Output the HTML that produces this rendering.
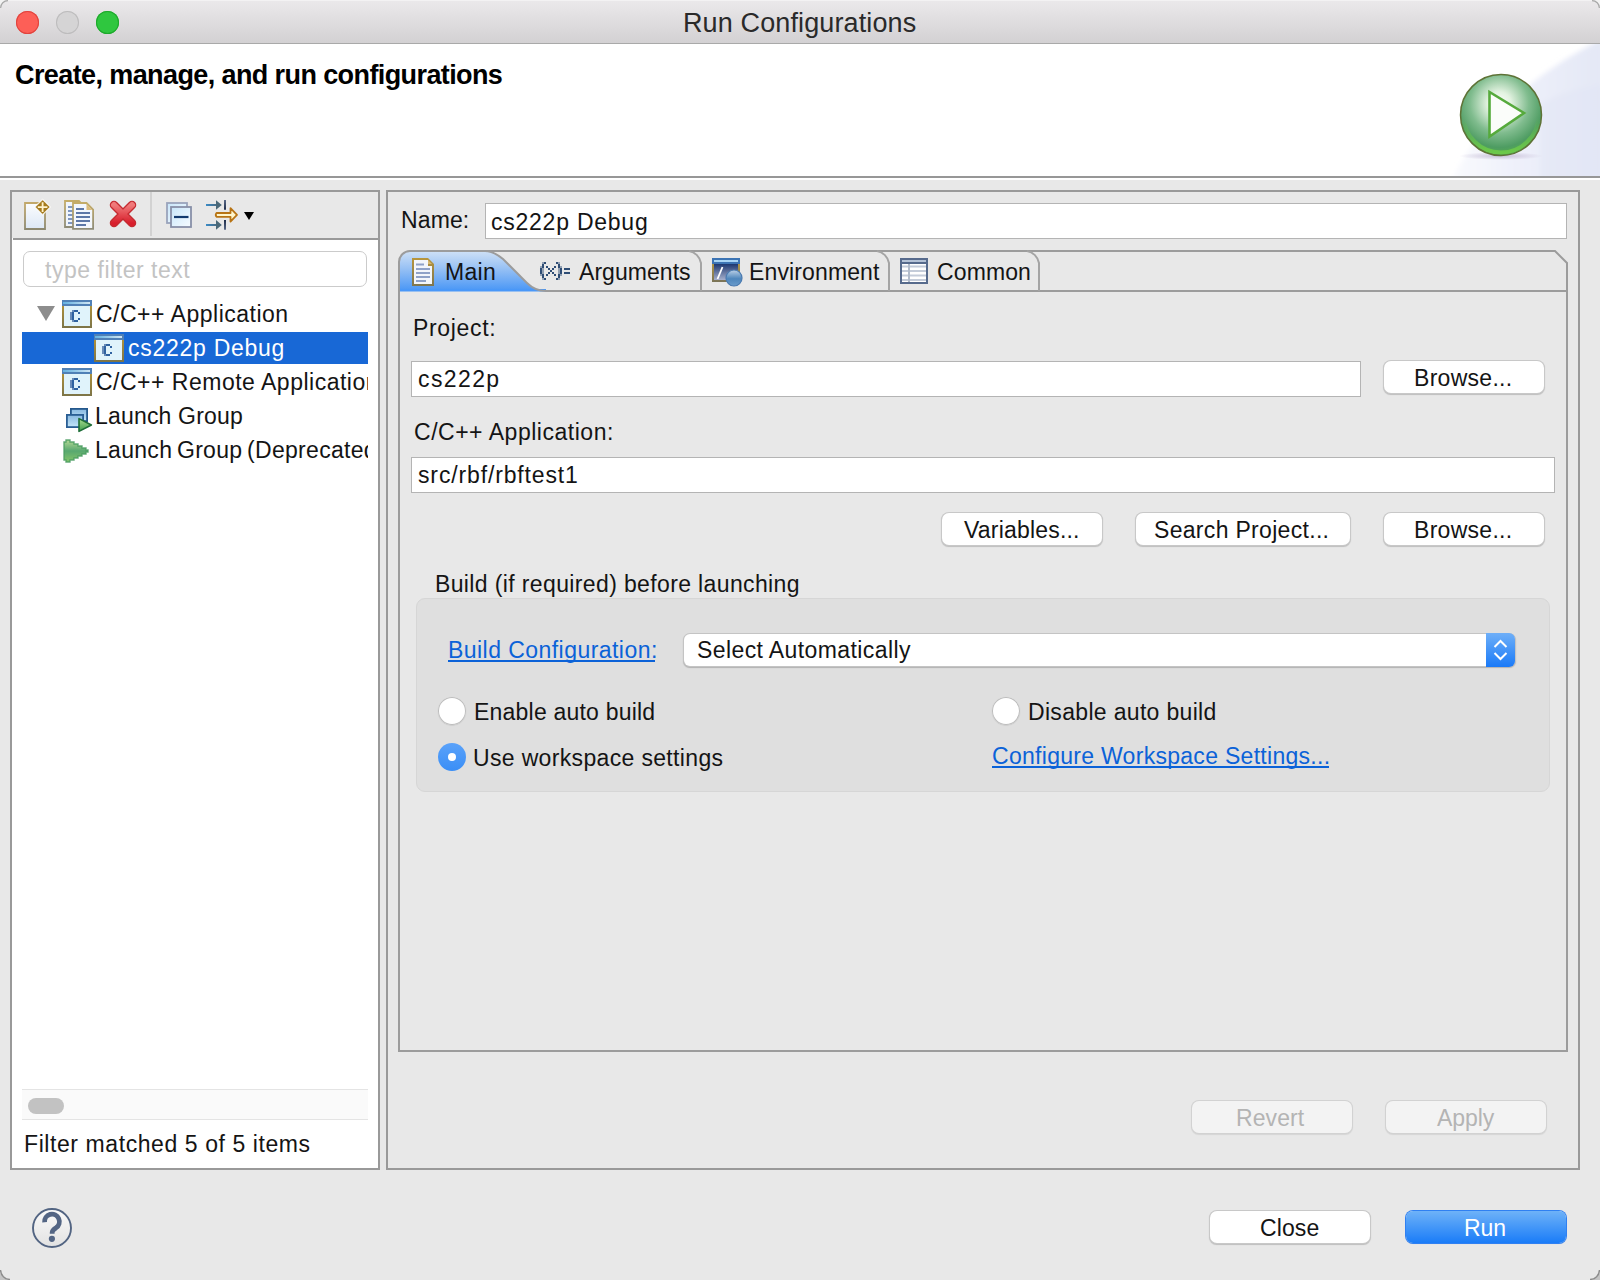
<!DOCTYPE html>
<html><head><meta charset="utf-8">
<style>
html,body{margin:0;padding:0}
body{width:1600px;height:1280px;position:relative;overflow:hidden;background:#e8e8e8;font-family:"Liberation Sans",sans-serif;color:#111}
.a{position:absolute}
.t{position:absolute;font-size:23px;line-height:23px;white-space:pre;letter-spacing:0.85px;color:#141414}
.box{position:absolute;box-sizing:border-box}
.btn{position:absolute;box-sizing:border-box;background:#fff;border-radius:7px;box-shadow:0 0 0 1px #c8c8c8,0 1px 1px 0.5px rgba(0,0,0,0.18)}
.bord{position:absolute;box-sizing:border-box;border:2px solid #999}
</style></head>
<body>
<!-- title bar -->
<div class="a" style="left:0;top:0;width:1600px;height:43px;background:linear-gradient(#ebe9eb,#d3d1d3);border-radius:10px 10px 0 0"></div>
<div class="a" style="left:0;top:43px;width:1600px;height:1px;background:#a9a9a9"></div>
<div class="a" style="left:8px;top:0;width:1584px;height:1px;background:#f3f2f3"></div>
<div class="a" style="left:16px;top:10.5px;width:23.2px;height:23.2px;border-radius:50%;background:#fd5f57;box-shadow:inset 0 0 0 1px #e0443e"></div>
<div class="a" style="left:56px;top:10.5px;width:23.2px;height:23.2px;border-radius:50%;background:#d5d4d5;box-shadow:inset 0 0 0 1px #bdbcbd"></div>
<div class="a" style="left:96px;top:10.5px;width:23.2px;height:23.2px;border-radius:50%;background:#2fc73f;box-shadow:inset 0 0 0 1px #1ea82c"></div>
<div class="t" style="left:683px;top:10px;font-size:27px;line-height:27px;letter-spacing:0.12px;color:#2a2a2a">Run Configurations</div>

<!-- header -->
<div class="a" style="left:0;top:44px;width:1600px;height:132px;background:#fff"></div>
<div class="a" style="left:0;top:176px;width:1600px;height:2px;background:#979797"></div>
<div class="a" style="left:0;top:178px;width:1600px;height:2px;background:#fff"></div>
<svg class="a" style="left:1400px;top:44px" width="200" height="132" viewBox="1400 44 200 132">
 <defs>
  <filter id="blr" x="-20%" y="-20%" width="140%" height="140%"><feGaussianBlur stdDeviation="2.5"/></filter>
  <linearGradient id="sw1" x1="1450" y1="0" x2="1600" y2="0" gradientUnits="userSpaceOnUse"><stop offset="0" stop-color="#fafbfe"/><stop offset="0.45" stop-color="#eef0fa"/><stop offset="1" stop-color="#e4e8f6"/></linearGradient>
  <radialGradient id="pb" cx="0.48" cy="0.36" r="0.66"><stop offset="0" stop-color="#ffffff"/><stop offset="0.22" stop-color="#e2f2e0"/><stop offset="0.55" stop-color="#80bc8e"/><stop offset="0.82" stop-color="#4e9c62"/><stop offset="1" stop-color="#58b048"/></radialGradient>
  <linearGradient id="rim" x1="0" y1="0" x2="0" y2="1"><stop offset="0.55" stop-color="#6cc84a" stop-opacity="0"/><stop offset="1" stop-color="#6cc84a" stop-opacity="1"/></linearGradient>
  <radialGradient id="psh" cx="0.5" cy="0.5" r="0.5"><stop offset="0" stop-color="#c8c0d8"/><stop offset="1" stop-color="#c8c0d8" stop-opacity="0"/></radialGradient>
 </defs>
 <g filter="url(#blr)">
  <path d="M1451 182C1472 138 1515 82 1604 38V182Z" fill="url(#sw1)"/>
  <path d="M1540 104C1560 93 1580 87 1604 85V180H1540Z" fill="#dfe4f5" opacity="0.45"/>
 </g>
 <ellipse cx="1501" cy="156" rx="42" ry="4" fill="url(#psh)"/>
 <circle cx="1501" cy="115" r="40.5" fill="url(#pb)"/>
 <circle cx="1501" cy="115" r="37.5" fill="none" stroke="url(#rim)" stroke-width="4"/>
 <circle cx="1501" cy="115" r="40.5" fill="none" stroke="#5e7236" stroke-width="1.5"/>
 <path d="M1489.5 92V136.5L1524 113Z" fill="#fbfdfa" stroke="#56aa3c" stroke-width="2.6" stroke-linejoin="miter"/>
</svg>
<div class="t" style="left:15px;top:62px;font-size:27px;line-height:27px;font-weight:bold;letter-spacing:-0.6px;color:#000">Create, manage, and run configurations</div>

<!-- left panel -->
<div class="bord" style="left:10px;top:190px;width:370px;height:980px;background:#fff"></div>
<div class="a" style="left:12px;top:192px;width:366px;height:46px;background:#e8e8e8"></div>
<div class="a" style="left:13px;top:238px;width:365px;height:2px;background:#999"></div>

<!-- toolbar icons -->
<svg class="a" style="left:20px;top:196px" width="34" height="38" viewBox="0 0 34 38">
 <defs>
  <linearGradient id="pgF" x1="0" y1="0" x2="0" y2="1"><stop offset="0" stop-color="#fbfcfe"/><stop offset="1" stop-color="#dde8f6"/></linearGradient>
  <linearGradient id="pgB" x1="0" y1="0" x2="0" y2="1"><stop offset="0" stop-color="#c2a86a"/><stop offset="1" stop-color="#8c8870"/></linearGradient>
 </defs>
 <path d="M5 7h20v26H5z" fill="url(#pgF)" stroke="url(#pgB)" stroke-width="1.8"/>
 <path d="M22.6 3.4l7.7 7.7-7.7 7.7-7.7-7.7z" fill="#a47a1e" stroke="#ffffff" stroke-opacity="0.75" stroke-width="1.4"/>
 <path d="M22.6 4.6l6.5 6.5-6.5 6.5-6.5-6.5z" fill="#a57a1c"/>
 <path d="M22.6 6.3v9.6M17.8 11.1h9.6" stroke="#fff2cc" stroke-width="1.8"/>
</svg>
<svg class="a" style="left:62px;top:198px" width="36" height="34" viewBox="0 0 36 34">
 <defs><linearGradient id="cpb" x1="0" y1="0" x2="0" y2="1"><stop offset="0" stop-color="#c4ac68"/><stop offset="1" stop-color="#8e8c78"/></linearGradient></defs>
 <path d="M3 3h14l2 2v24H3z" fill="#f0f5fc" stroke="url(#cpb)" stroke-width="1.8"/>
 <path d="M6 9h5M6 13h5M6 17h5M6 21h5M6 25h5" stroke="#7e96c0" stroke-width="1.8"/>
 <path d="M11 5h13.5l6.6 6.6V30.8H11z" fill="#f3f7fd" stroke="url(#cpb)" stroke-width="1.8"/>
 <path d="M24.5 5.9v6.1h5.7z" fill="#dcbc7c"/>
 <path d="M14 11h8M14 15h14M14 19h14M14 23h14M14 27h10" stroke="#5d78a8" stroke-width="1.8"/>
</svg>
<svg class="a" style="left:108px;top:199px" width="30" height="30" viewBox="0 0 30 30">
 <defs><linearGradient id="rx" x1="0" y1="0" x2="0" y2="1"><stop offset="0" stop-color="#f07a7a"/><stop offset="1" stop-color="#d81e2c"/></linearGradient></defs>
 <path d="M6 6L24 24M24 6L6 24" stroke="#c42a30" stroke-width="8.5" stroke-linecap="round"/>
 <path d="M6 6L24 24M24 6L6 24" stroke="url(#rx)" stroke-width="6" stroke-linecap="round"/>
</svg>
<div class="a" style="left:150px;top:192px;width:2px;height:44px;background:#d2d2d2"></div>
<svg class="a" style="left:164px;top:200px" width="30" height="30" viewBox="0 0 30 30">
 <defs><linearGradient id="cb" x1="0" y1="0" x2="1" y2="1"><stop offset="0" stop-color="#c8e6fa"/><stop offset="1" stop-color="#f6fbff"/></linearGradient></defs>
 <rect x="3" y="3" width="20" height="20" fill="url(#cb)" stroke="#9aa4bc" stroke-width="1.8"/>
 <rect x="7" y="7" width="20" height="20" fill="url(#cb)" stroke="#8890a8" stroke-width="1.8"/>
 <path d="M10 17h14.5" stroke="#123a6e" stroke-width="2.2"/>
</svg>
<svg class="a" style="left:204px;top:198px" width="40" height="34" viewBox="0 0 40 34">
 <defs><linearGradient id="sh1" x1="2" y1="0" x2="13" y2="0" gradientUnits="userSpaceOnUse"><stop offset="0" stop-color="#3a8cc8"/><stop offset="1" stop-color="#4a6a80"/></linearGradient>
 <linearGradient id="bar1" x1="0" y1="2" x2="0" y2="12" gradientUnits="userSpaceOnUse"><stop offset="0" stop-color="#5a6a88"/><stop offset="1" stop-color="#1e2c4a"/></linearGradient>
 <linearGradient id="bar2" x1="0" y1="22" x2="0" y2="32" gradientUnits="userSpaceOnUse"><stop offset="0" stop-color="#1e2c4a"/><stop offset="1" stop-color="#5a6a88"/></linearGradient></defs>
 <path d="M2 7h10.5M2 26.9h10.5" stroke="url(#sh1)" stroke-width="2"/>
 <path d="M12 2.2L17.8 7 12 11.8zM12 22.1L17.8 26.9 12 31.7z" fill="#4a6878"/>
 <path d="M21 2.1v9.6" stroke="url(#bar1)" stroke-width="2"/>
 <path d="M21 22.1v9.6" stroke="url(#bar2)" stroke-width="2"/>
 <path d="M12.5 15H26.5V10.2L33 16.9 26.5 23.6V18.8H12.5Q11 16.9 12.5 15z" fill="#fff6cc" stroke="#b87414" stroke-width="1.8" stroke-linejoin="round"/>
</svg>
<svg class="a" style="left:242px;top:210px" width="14" height="12" viewBox="0 0 14 12"><path d="M2 2h10l-5 8z" fill="#000"/></svg>

<!-- filter box -->
<div class="box" style="left:23px;top:251px;width:344px;height:36px;border:1.5px solid #cbcbcb;border-radius:7px;background:#fff"></div>
<div class="t" style="left:45px;top:259px;color:#c3c3c3;letter-spacing:0.53px">type filter text</div>

<!-- tree -->
<svg class="a" style="left:36px;top:304px" width="20" height="18" viewBox="0 0 20 18"><path d="M1 2h18l-9 15z" fill="#8d8d8d"/></svg>
<div class="a" style="left:22px;top:332px;width:346px;height:32px;background:#1868d6"></div>
<svg width="0" height="0" style="position:absolute">
 <defs>
  <linearGradient id="cgold" x1="0" y1="0" x2="0" y2="1"><stop offset="0" stop-color="#bb9838"/><stop offset="1" stop-color="#7c7448"/></linearGradient>
  <linearGradient id="cstripe" x1="0" y1="0" x2="1" y2="0"><stop offset="0" stop-color="#62b0e0"/><stop offset="1" stop-color="#d0e6f4"/></linearGradient>
  <symbol id="cicon" viewBox="0 0 30 28">
   <rect x="0" y="0" width="30" height="28" fill="url(#cgold)"/>
   <rect x="2" y="6" width="26" height="20" fill="#e0f3fb"/>
   <rect x="0" y="0" width="30" height="6" fill="#5080b6"/>
   <rect x="1" y="2" width="27" height="2" fill="url(#cstripe)"/>
   <path d="M12 10h4v2h-4zM16 12h2v2h-2zM10 12h2v8h-2zM12 20h4v2h-4zM16 18h2v2h-2z" fill="#2f62a0"/>
   <path d="M8 12h2v8H8zM10 10h2v2h-2zM10 20h2v2h-2z" fill="#6a8cb8"/>
  </symbol>
 </defs>
</svg>
<svg class="a" style="left:62px;top:300px" width="30" height="28"><use href="#cicon"/></svg>
<svg class="a" style="left:94px;top:334px" width="30" height="28"><use href="#cicon"/></svg>
<svg class="a" style="left:62px;top:368px" width="30" height="28"><use href="#cicon"/></svg>
<svg class="a" style="left:64px;top:405px" width="30" height="30" viewBox="0 0 30 30">
 <defs><linearGradient id="lgw" x1="0" y1="0" x2="0" y2="1"><stop offset="0" stop-color="#88b8e0"/><stop offset="1" stop-color="#c4e6fa"/></linearGradient>
 <linearGradient id="lgg" x1="0" y1="0" x2="0" y2="1"><stop offset="0" stop-color="#a8dc90"/><stop offset="1" stop-color="#3c9c4c"/></linearGradient></defs>
 <rect x="6.9" y="3.9" width="16.2" height="12.2" fill="url(#lgw)" stroke="#24588c" stroke-width="1.8"/>
 <rect x="2.9" y="9.9" width="16.2" height="12.2" fill="url(#lgw)" stroke="#2a5e94" stroke-width="1.8"/>
 <path d="M15 13.6L27.4 20 15 26.4Z" fill="url(#lgg)" stroke="#1e6e38" stroke-width="1.6" stroke-linejoin="round"/>
</svg>
<svg class="a" style="left:62px;top:439px" width="28" height="26" viewBox="62 439 28 26">
 <defs><linearGradient id="gtri" x1="0" y1="440" x2="0" y2="462" gradientUnits="userSpaceOnUse"><stop offset="0" stop-color="#b4d894"/><stop offset="0.5" stop-color="#58a870"/><stop offset="1" stop-color="#84c468"/></linearGradient></defs>
 <path d="M66 440H70V442H74V444H78V446H82V448H86V450H88V452H86V454H82V456H78V458H74V460H70V462H66V460H64V442H66Z" fill="url(#gtri)"/>
 <path d="M66 440H70V442H74V444H78V446H82V448H86V450H88V452H86V454H82V456H78V458H74V460H70V462H66V460H64V442H66Z" fill="none" stroke="#4a9c62" stroke-width="1.4" stroke-opacity="0.85"/>
</svg>
<div class="t" style="left:96px;top:303px;letter-spacing:0.50px">C/C++ Application</div>
<div class="t" style="left:128px;top:337px;letter-spacing:0.73px;color:#fff">cs222p Debug</div>
<div class="a" style="left:92px;top:366px;width:276px;height:32px;overflow:hidden"><div class="t" style="left:4px;top:5px;letter-spacing:0.50px">C/C++ Remote Application</div></div>
<div class="t" style="left:95px;top:405px;letter-spacing:0.18px">Launch Group</div>
<div class="a" style="left:92px;top:434px;width:276px;height:32px;overflow:hidden"><div class="t" style="left:3px;top:5px;letter-spacing:0.30px;word-spacing:-2px">Launch Group (Deprecated)</div></div>

<!-- scrollbar -->
<div class="a" style="left:22px;top:1089px;width:346px;height:31px;background:#fafafa;border-top:1.5px solid #e4e4e4;border-bottom:1.5px solid #e4e4e4;box-sizing:border-box"></div>
<div class="a" style="left:28px;top:1098px;width:36px;height:16px;border-radius:8px;background:#c2c2c2"></div>
<div class="t" style="left:24px;top:1133px;letter-spacing:0.58px">Filter matched 5 of 5 items</div>

<!-- right panel -->
<div class="bord" style="left:386px;top:190px;width:1194px;height:980px"></div>
<div class="t" style="left:401px;top:209px;letter-spacing:0.12px">Name:</div>
<div class="box" style="left:485px;top:203px;width:1082px;height:36px;background:#fff;border:1px solid #b4b4b4"></div>
<div class="t" style="left:491px;top:211px;letter-spacing:0.76px">cs222p Debug</div>

<!-- tab folder -->
<svg class="a" style="left:392px;top:244px" width="1182" height="814" viewBox="392 244 1182 814">
 <defs><linearGradient id="tabg" x1="0" y1="251" x2="0" y2="291" gradientUnits="userSpaceOnUse"><stop offset="0" stop-color="#cfe1f6"/><stop offset="0.45" stop-color="#96c0f4"/><stop offset="1" stop-color="#4896f6"/></linearGradient></defs>
 <!-- selected tab fill -->
 <path d="M399 291V262C399 256 404 251 410 251H485C492 251 497 254 503 259L527 283C533 289 539 291 546 291Z" fill="url(#tabg)"/>
 <rect x="399" y="289" width="147" height="2.5" fill="#4a98f8"/>
 <!-- outline -->
 <path d="M399 1051V262C399 256 404 251 410 251H1555L1567 263V1051Z" fill="none" stroke="#9c9c9c" stroke-width="2"/>
 <path d="M485 251C492 251 497 254 503 259L527 283C533 289 539 291 546 291H1567" fill="none" stroke="#9c9c9c" stroke-width="2"/>
 <path d="M689 251C695 252 700 257 701 263V291M877 251C883 252 888 257 889 263V291M1027 251C1033 252 1038 257 1039 263V291" fill="none" stroke="#a4a4a4" stroke-width="2"/>
</svg>
<!-- tab icons -->
<svg class="a" style="left:412px;top:258px" width="22" height="28" viewBox="0 0 22 28">
 <defs><linearGradient id="mpg" x1="0" y1="0" x2="0" y2="1"><stop offset="0" stop-color="#b8963c"/><stop offset="1" stop-color="#7e7650"/></linearGradient></defs>
 <path d="M0 0h16l6 6v22H0z" fill="url(#mpg)"/>
 <path d="M2 2h14v6h4v18H2z" fill="#f3f6fb"/>
 <path d="M16 2l4 4h-4z" fill="#d8b870"/>
 <path d="M4 6.5h8M4 11h14M4 15h14M4 19h14M4 23h10" stroke="#8fa2c8" stroke-width="2"/>
</svg>
<svg class="a" style="left:540px;top:262px" width="32" height="18" viewBox="0 0 32 18">
 <path d="M4 0h2v2H4zM2 2h2v4H2zM0 6h2v6H0zM2 12h2v4H2zM4 16h2v2H4zM16 0h2v2h-2zM18 2h2v4h-2zM20 6h2v6h-2zM18 12h2v4h-2zM16 16h2v2h-2zM6 4h2v2H6zM14 4h2v2h-2zM8 6h2v2H8zM12 6h2v2h-2zM10 8h2v2h-2zM8 10h2v2H8zM12 10h2v2h-2zM6 12h2v2H6zM14 12h2v2h-2zM24 6h6v2h-6zM24 10h6v2h-6z" fill="#2f4d75"/>
 <path d="M2 6h2v6H2zM0 4h2v2H0zM0 12h2v2H0zM18 6h2v6h-2zM20 4h2v2h-2zM20 12h2v2h-2zM2 0h2v2H2zM2 16h2v2H2zM18 0h2v2h-2zM18 16h2v2h-2z" fill="#2f4d75" fill-opacity="0.45"/>
</svg>
<svg class="a" style="left:711px;top:257px" width="34" height="30" viewBox="0 0 34 30">
 <defs>
  <linearGradient id="evb" x1="0" y1="0" x2="0" y2="1"><stop offset="0" stop-color="#1c3770"/><stop offset="1" stop-color="#a7b0cc"/></linearGradient>
  <linearGradient id="evg" x1="0" y1="0" x2="0" y2="1"><stop offset="0" stop-color="#c0a040"/><stop offset="1" stop-color="#7a7458"/></linearGradient>
  <linearGradient id="ball" x1="0" y1="0" x2="0" y2="1"><stop offset="0" stop-color="#bcd0e6"/><stop offset="0.55" stop-color="#4e86bc"/><stop offset="1" stop-color="#6a9ccc"/></linearGradient>
 </defs>
 <rect x="1" y="1" width="28" height="24" fill="url(#evg)"/>
 <rect x="3" y="7" width="24" height="16" fill="url(#evb)"/>
 <rect x="1" y="1" width="28" height="6" fill="#3c74b4"/>
 <rect x="3" y="3" width="24" height="2" fill="#a8d4f4"/>
 <path d="M6.5 22L11.5 10" stroke="#fff" stroke-width="1.8"/>
 <circle cx="23" cy="21" r="8" fill="url(#ball)" stroke="#4a7ab0" stroke-width="1.2"/>
</svg>
<svg class="a" style="left:900px;top:258px" width="28" height="26" viewBox="0 0 28 26">
 <rect x="0" y="0" width="28" height="26" fill="#566a8c"/>
 <rect x="2" y="2" width="24" height="2" fill="#b4c2d6"/>
 <rect x="2" y="6" width="24" height="18" fill="#fff"/>
 <path d="M2 8.5h24M2 13h24M2 17.5h24M2 22h24" stroke="#c4ccd9" stroke-width="2"/>
 <path d="M9 6v18" stroke="#b2bccb" stroke-width="2"/>
</svg>
<div class="t" style="left:445px;top:261px;letter-spacing:0.33px">Main</div>
<div class="t" style="left:579px;top:261px;letter-spacing:0.05px">Arguments</div>
<div class="t" style="left:749px;top:261px;letter-spacing:0.13px">Environment</div>
<div class="t" style="left:937px;top:261px;letter-spacing:0.12px">Common</div>

<!-- main tab content -->
<div class="t" style="left:413px;top:317px;letter-spacing:0.66px">Project:</div>
<div class="box" style="left:411px;top:361px;width:950px;height:36px;background:#fff;border:1px solid #b4b4b4"></div>
<div class="t" style="left:418px;top:368px;letter-spacing:1.39px">cs222p</div>
<div class="btn" style="left:1384px;top:361px;width:160px;height:32px"></div>
<div class="t" style="left:1414px;top:367px;letter-spacing:0.29px">Browse...</div>
<div class="t" style="left:414px;top:421px;letter-spacing:0.52px">C/C++ Application:</div>
<div class="box" style="left:411px;top:457px;width:1144px;height:36px;background:#fff;border:1px solid #b4b4b4"></div>
<div class="t" style="left:418px;top:464px;letter-spacing:0.86px">src/rbf/rbftest1</div>
<div class="btn" style="left:942px;top:513px;width:160px;height:32px"></div>
<div class="t" style="left:964px;top:519px;letter-spacing:0.19px">Variables...</div>
<div class="btn" style="left:1136px;top:513px;width:214px;height:32px"></div>
<div class="t" style="left:1154px;top:519px;letter-spacing:0.31px">Search Project...</div>
<div class="btn" style="left:1384px;top:513px;width:160px;height:32px"></div>
<div class="t" style="left:1414px;top:519px;letter-spacing:0.29px">Browse...</div>

<div class="t" style="left:435px;top:573px;letter-spacing:0.37px">Build (if required) before launching</div>
<div class="box" style="left:416px;top:598px;width:1134px;height:194px;background:#dfdfdf;border:1px solid #d6d6d6;border-radius:9px"></div>
<div class="t" style="left:448px;top:639px;letter-spacing:0.45px;color:#0b62d8">Build Configuration:</div>
<div class="a" style="left:448px;top:660px;width:207px;height:2px;background:#0b62d8"></div>
<div class="btn" style="left:684px;top:634px;width:831px;height:32px;border-radius:6px;box-shadow:0 0 0 1px #c4c4c4,0 1px 1px 0.5px rgba(0,0,0,0.2)"></div>
<div class="a" style="left:1486px;top:633px;width:29px;height:34px;border-radius:0 6px 6px 0;background:linear-gradient(#6eaff8,#1a7af8)"></div>
<svg class="a" style="left:1486px;top:633px" width="29" height="34" viewBox="0 0 29 34"><path d="M8.5 14L14.5 8L20.5 14M8.5 20L14.5 26L20.5 20" fill="none" stroke="#fff" stroke-width="2"/></svg>
<div class="t" style="left:697px;top:639px;letter-spacing:0.40px">Select Automatically</div>

<div class="a" style="left:438px;top:697px;width:28px;height:28px;border-radius:50%;background:#fff;box-shadow:0 0 0 1px #bdbdbd inset,0 0.5px 1px rgba(0,0,0,0.15)"></div>
<div class="t" style="left:474px;top:701px;letter-spacing:0.21px">Enable auto build</div>
<div class="a" style="left:438px;top:743px;width:28px;height:28px;border-radius:50%;background:linear-gradient(#5aa2fa,#3a8ef6)"></div>
<div class="a" style="left:448px;top:753px;width:8px;height:8px;border-radius:50%;background:#fff"></div>
<div class="t" style="left:473px;top:747px;letter-spacing:0.34px">Use workspace settings</div>
<div class="a" style="left:992px;top:697px;width:28px;height:28px;border-radius:50%;background:#fff;box-shadow:0 0 0 1px #bdbdbd inset,0 0.5px 1px rgba(0,0,0,0.15)"></div>
<div class="t" style="left:1028px;top:701px;letter-spacing:0.32px">Disable auto build</div>
<div class="t" style="left:992px;top:745px;letter-spacing:0.29px;color:#0b62d8">Configure Workspace Settings...</div>
<div class="a" style="left:992px;top:766px;width:337px;height:2px;background:#0b62d8"></div>

<div class="btn" style="left:1192px;top:1101px;width:160px;height:32px;background:#f3f3f3;box-shadow:0 0 0 1px #d2d2d2,0 1px 1px 0.5px rgba(0,0,0,0.08)"></div>
<div class="t" style="left:1236px;top:1107px;letter-spacing:0.10px;color:#b4b4b4">Revert</div>
<div class="btn" style="left:1386px;top:1101px;width:160px;height:32px;background:#f3f3f3;box-shadow:0 0 0 1px #d2d2d2,0 1px 1px 0.5px rgba(0,0,0,0.08)"></div>
<div class="t" style="left:1437px;top:1107px;letter-spacing:-0.07px;color:#b4b4b4">Apply</div>

<!-- bottom -->
<svg class="a" style="left:30px;top:1206px" width="44" height="44" viewBox="30 1206 44 44">
 <defs><linearGradient id="hg" x1="0" y1="0" x2="0" y2="1"><stop offset="0" stop-color="#fafafa"/><stop offset="1" stop-color="#e2e2e2"/></linearGradient></defs>
 <circle cx="52" cy="1228" r="19" fill="url(#hg)" stroke="#526482" stroke-width="1.9"/>
 <path d="M44.6 1222.3A7.4 7.4 0 1 1 56 1227.8Q52.2 1230 52.2 1232.5V1233.8" fill="none" stroke="#536584" stroke-width="4.8"/>
 <circle cx="51.9" cy="1238.8" r="3.1" fill="#536584"/>
</svg>
<div class="btn" style="left:1210px;top:1211px;width:160px;height:32px"></div>
<div class="t" style="left:1260px;top:1217px;letter-spacing:0.10px">Close</div>
<div class="btn" style="left:1406px;top:1211px;width:160px;height:32px;background:linear-gradient(#6eb2f8,#1a7cf8);box-shadow:0 0 0 1px #2f80f2,0 1px 1px rgba(0,0,0,0.12)"></div>
<div class="t" style="left:1464px;top:1217px;letter-spacing:-0.10px;color:#fff">Run</div>
<!-- window corners -->
<svg class="a" style="left:0;top:0" width="12" height="12" viewBox="0 0 12 12"><path d="M0 0H8A8 8 0 0 0 0 8Z" fill="#f2f2f2"/><path d="M8 0.6A7.4 7.4 0 0 0 0.6 8" fill="none" stroke="#a8a8a8" stroke-width="1.2"/></svg>
<svg class="a" style="left:1588px;top:0" width="12" height="12" viewBox="0 0 12 12"><path d="M12 0H4A8 8 0 0 1 12 8Z" fill="#f2f2f2"/><path d="M4 0.6A7.4 7.4 0 0 1 11.4 8" fill="none" stroke="#a8a8a8" stroke-width="1.2"/></svg>
<svg class="a" style="left:0;top:1268px" width="12" height="12" viewBox="0 0 12 12"><path d="M0 12H10A10 10 0 0 1 0 2Z" fill="#c4c4c4"/><path d="M10 11.4A9.4 9.4 0 0 1 0.6 2" fill="none" stroke="#8c8c8c" stroke-width="1.4"/></svg>
<svg class="a" style="left:1588px;top:1268px" width="12" height="12" viewBox="0 0 12 12"><path d="M12 12H2A10 10 0 0 0 12 2Z" fill="#c4c4c4"/><path d="M2 11.4A9.4 9.4 0 0 0 11.4 2" fill="none" stroke="#8c8c8c" stroke-width="1.4"/></svg>
</body></html>
